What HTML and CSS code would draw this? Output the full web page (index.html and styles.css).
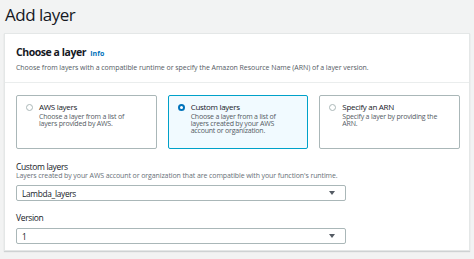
FILE: index.html
```html
<!DOCTYPE html>
<html lang="en">
<head>
    <meta charset="UTF-8">
    <title>Add layer</title>
    <link rel="stylesheet" href="styles.css">
</head>
<body>
    <h1 class="page-title">Add layer</h1>

    <div class="container">
        <div class="container-header">
            <h2>Choose a layer <a class="info-link" href="#">Info</a></h2>
            <p class="header-desc">Choose from layers with a compatible runtime or specify the Amazon Resource Name (ARN) of a layer version.</p>
        </div>

        <div class="container-body">
            <div class="tiles">
                <label class="tile">
                    <span class="radio"></span>
                    <span class="tile-text">
                        <span class="tile-title">AWS layers</span>
                        <span class="tile-desc">Choose a layer from a list of layers provided by AWS.</span>
                    </span>
                </label>
                <label class="tile selected">
                    <span class="radio checked"></span>
                    <span class="tile-text">
                        <span class="tile-title">Custom layers</span>
                        <span class="tile-desc">Choose a layer from a list of layers created by your AWS account or organization.</span>
                    </span>
                </label>
                <label class="tile">
                    <span class="radio"></span>
                    <span class="tile-text">
                        <span class="tile-title">Specify an ARN</span>
                        <span class="tile-desc">Specify a layer by providing the ARN.</span>
                    </span>
                </label>
            </div>

            <div class="form-field">
                <div class="field-label">Custom layers</div>
                <div class="field-desc">Layers created by your AWS account or organization that are compatible with your function's runtime.</div>
                <div class="select">
                    <span>Lambda_layers</span>
                    <span class="caret"></span>
                </div>
            </div>

            <div class="form-field">
                <div class="field-label">Version</div>
                <div class="select">
                    <span>1</span>
                    <span class="caret"></span>
                </div>
            </div>
        </div>
    </div>
</body>
</html>
```

FILE: styles.css
```css
body {
    margin: 0;
    background-color: #f2f3f3;
    font-family: "Open Sans", "Liberation Sans", sans-serif;
    color: #16191f;
    height: 259px;
    overflow: hidden;
}

.page-title {
    margin: 0;
    padding: 5px 0 0 5px;
    height: 33px;
    box-sizing: border-box;
    font-size: 17px;
    font-weight: normal;
    letter-spacing: -0.5px;
    line-height: 20px;
}

.container {
    margin: 0 4px;
    background-color: #fff;
    border: 1px solid #e4e7e7;
    box-shadow: 0 1px 1px rgba(0, 28, 36, 0.15);
}

.container-header {
    padding: 11px 9px 10px 11px;
    border-bottom: 1px solid #eaeded;
}

.container-header h2 {
    margin: 0;
    font-size: 10.5px;
    font-weight: bold;
    letter-spacing: -0.45px;
    line-height: 14px;
}

.info-link {
    color: #0073bb;
    font-size: 7px;
    letter-spacing: 0;
    text-decoration: none;
    margin-left: 2px;
}

.header-desc {
    margin: 2px 0 0;
    font-size: 7px;
    letter-spacing: -0.05px;
    line-height: 9px;
    color: #545b64;
}

.container-body {
    padding: 12px 9px 6px 11px;
}

.tiles {
    display: grid;
    grid-template-columns: 1fr 1fr 1fr;
    gap: 11px;
}

.tile {
    display: flex;
    gap: 6px;
    padding: 6px 12px 0 9px;
    height: 54px;
    box-sizing: border-box;
    border: 1px solid #aab7b8;
    border-radius: 2px;
}

.tile.selected {
    background-color: #f1faff;
    border-color: #00a1c9;
}

.radio {
    flex: none;
    width: 7px;
    height: 7px;
    margin-top: 2px;
    border: 1px solid #aab7b8;
    border-radius: 50%;
    box-sizing: border-box;
    background: #fff;
}

.radio.checked {
    border: 2px solid #0073bb;
}

.tile-text {
    display: flex;
    flex-direction: column;
}

.tile-title {
    font-size: 8px;
    letter-spacing: -0.3px;
    line-height: 10px;
    margin-bottom: 1px;
}

.tile-desc {
    font-size: 7px;
    letter-spacing: -0.2px;
    line-height: 7px;
    color: #545b64;
}

.form-field {
    margin-top: 12px;
    width: 330px;
}

.form-field + .form-field {
    margin-top: 11px;
}

.field-label {
    font-size: 8.5px;
    letter-spacing: -0.35px;
    line-height: 11px;
}

.field-desc {
    font-size: 7px;
    letter-spacing: -0.1px;
    line-height: 8px;
    color: #687078;
}

.select {
    display: flex;
    align-items: center;
    justify-content: space-between;
    margin-top: 5px;
    height: 16px;
    box-sizing: border-box;
    padding: 0 10px 0 5px;
    border: 1px solid #aab7b8;
    border-radius: 2px;
    font-size: 8.3px;
    letter-spacing: -0.3px;
}

.caret {
    width: 0;
    height: 0;
    margin-top: -1px;
    border-left: 3px solid transparent;
    border-right: 3px solid transparent;
    border-top: 4px solid #545b64;
}
```
